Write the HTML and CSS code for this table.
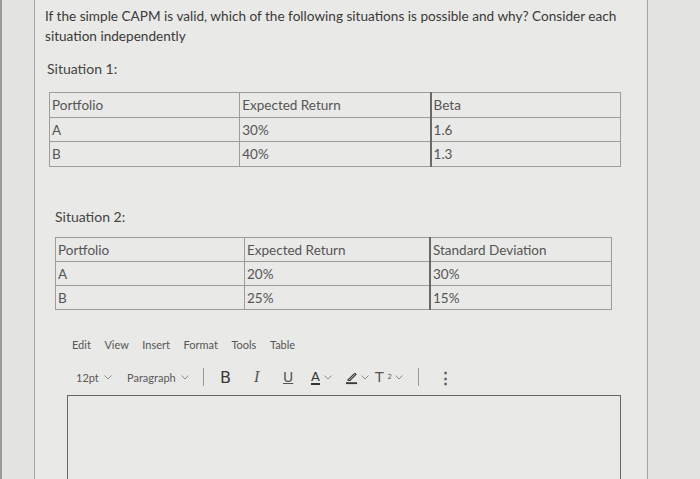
FILE: index.html
```html
<!DOCTYPE html>
<html>
<head>
<meta charset="utf-8">
<link rel="stylesheet" href="styles.css">
</head>
<body>
<div class="edge"></div>
<div class="panel">
  <p class="question">If the simple CAPM is valid, which of the following situations is possible and why? Consider each situation independently</p>
  <p class="label label-1">Situation 1:</p>
  <table class="data t1">
    <tr><td>Portfolio</td><td class="mid">Expected Return</td><td class="last">Beta</td></tr>
    <tr><td>A</td><td class="mid">30%</td><td class="last">1.6</td></tr>
    <tr><td>B</td><td class="mid">40%</td><td class="last">1.3</td></tr>
  </table>
  <p class="label label-2">Situation 2:</p>
  <table class="data t2">
    <tr><td>Portfolio</td><td class="mid">Expected Return</td><td class="last">Standard Deviation</td></tr>
    <tr><td>A</td><td class="mid">20%</td><td class="last">30%</td></tr>
    <tr><td>B</td><td class="mid">25%</td><td class="last">15%</td></tr>
  </table>
  <div class="editor">
    <div class="menu">
      <span>Edit</span><span>View</span><span>Insert</span><span>Format</span><span>Tools</span><span>Table</span>
    </div>
    <div class="tools">
      <span class="item w-size">12pt <svg class="chev" viewBox="0 0 8 5"><path d="M0.5 0.5 L4 4 L7.5 0.5" /></svg></span>
      <span class="item w-para">Paragraph <svg class="chev" viewBox="0 0 8 5"><path d="M0.5 0.5 L4 4 L7.5 0.5" /></svg></span>
      <span class="item w-sep"><span class="sep"></span></span>
      <span class="item w-b bold">B</span>
      <span class="item w-i ital">I</span>
      <span class="item w-u under">U</span>
      <span class="item w-a color"><span class="a">A</span><svg class="chev" viewBox="0 0 8 5"><path d="M0.5 0.5 L4 4 L7.5 0.5" /></svg></span>
      <span class="item w-hl"><svg class="pen" viewBox="0 0 14 15"><path d="M3.2 10.2 L9.8 3.6 Q11.2 2.6 11.8 4.2 L5.2 10.8 Z" fill="none" stroke="#3a3a3a" stroke-width="1.3"/><rect x="1" y="12.6" width="12" height="2" fill="#3a3a3a"/></svg><svg class="chev" viewBox="0 0 8 5"><path d="M0.5 0.5 L4 4 L7.5 0.5" /></svg></span>
      <span class="item w-sup sup">T<sup>2</sup><svg class="chev" viewBox="0 0 8 5"><path d="M0.5 0.5 L4 4 L7.5 0.5" /></svg></span>
      <span class="item w-sep2"><span class="sep"></span></span>
      <span class="item more">&#8942;</span>
    </div>
    <div class="area"></div>
  </div>
</div>
</body>
</html>
```
FILE: styles.css
```css
html, body {
  margin: 0;
  padding: 0;
  height: 100%;
  overflow: hidden;
}
body {
  background: #e3e4e2;
  font-family: Lato, "Open Sans", sans-serif;
  color: #444;
  position: relative;
}
.edge {
  position: absolute;
  left: 0;
  top: 0;
  width: 2px;
  height: 100%;
  background: #9a9a9a;
}
.panel {
  margin-left: 34px;
  width: 614px;
  height: 479px;
  border-left: 1px solid #a4a4a4;
  border-right: 1px solid #a4a4a4;
  background: #e9e9e7;
  padding-top: 7px;
  box-sizing: border-box;
}
.question {
  margin: 0 0 0 10px;
  width: 590px;
  font-size: 13.6px;
  line-height: 19.5px;
  color: #3a3a3a;
}
.label {
  margin: 0;
  font-size: 14px;
  line-height: 20px;
  color: #444;
}
.label-1 {
  margin: 13px 0 0 12px;
}
.label-2 {
  margin: 40px 0 0 20px;
}
.data {
  border-collapse: collapse;
  font-size: 13.5px;
  color: #555;
}
.data td {
  border: 1px solid #9c9c9c;
  padding: 0 2px;
  line-height: 20px;
  vertical-align: middle;
  text-align: left;
}
.data td.mid {
  border-right: 2px solid #6a6a6a;
}
.t1 {
  margin: 13px 0 0 14px;
  width: 572px;
}
.t1 td {
  width: 190px;
  height: 23.7px;
}
.t2 {
  margin: 10px 0 0 20px;
  width: 557px;
}
.t2 td { height: 23px; }
.t2 td:first-child { width: 184px; }
.t2 td.mid { width: 180px; }
.editor {
  margin: 27px 0 0 0;
}
.menu {
  display: flex;
  gap: 13.5px;
  padding-left: 37px;
  font-size: 11px;
  line-height: 16px;
  color: #555;
}
.tools {
  display: flex;
  align-items: center;
  height: 24px;
  margin-top: 12px;
  padding-left: 41px;
  font-size: 11px;
  color: #5a5a5a;
}
.item {
  display: flex;
  align-items: center;
  gap: 5px;
  flex: none;
  color: #3a3a3a;
}
.w-size { width: 51px; color: #5a5a5a; }
.w-para { width: 76px; color: #5a5a5a; }
.w-sep { width: 17px; }
.w-b { width: 34px; }
.w-i { width: 29px; }
.w-u { width: 28px; }
.w-a { width: 34px; gap: 4px; }
.w-hl { width: 30px; gap: 3px; }
.w-sup { width: 43px; gap: 4px; }
.w-sep2 { width: 20px; }
.chev {
  width: 8px;
  height: 5px;
  fill: none;
  stroke: #8a8a8a;
  stroke-width: 1;
}
.sep {
  width: 1px;
  height: 18px;
  background: #9a9a9a;
}
.bold {
  font-family: "DejaVu Sans", sans-serif;
  font-size: 16px;
}
.ital {
  font-family: "Liberation Serif", serif;
  font-style: italic;
  font-size: 16px;
  color: #555;
}
.under {
  font-family: "DejaVu Sans", sans-serif;
  font-size: 14px;
  text-decoration: underline;
  color: #555;
}
.color .a {
  font-family: "DejaVu Sans", sans-serif;
  font-size: 13px;
  border-bottom: 2px solid #333;
  line-height: 13px;
}
.pen {
  width: 13px;
  height: 15px;
}
.sup {
  font-family: "DejaVu Sans", sans-serif;
  font-size: 14px;
  color: #555;
  gap: 3px;
}
.sup sup {
  font-size: 7px;
  vertical-align: 7px;
  margin-left: 1px;
}
.more {
  font-size: 15px;
  font-weight: bold;
  color: #555;
}
.area {
  margin: 6px 0 0 32px;
  width: 552px;
  height: 100px;
  border: 1.5px solid #666;
  border-bottom: none;
}
```
